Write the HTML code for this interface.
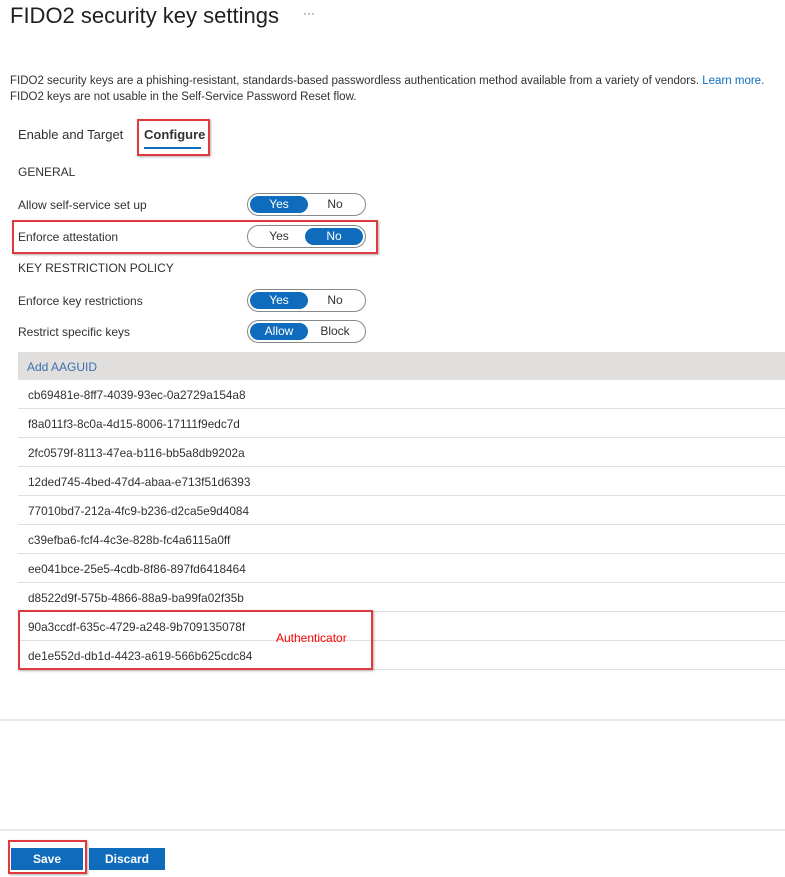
<!DOCTYPE html>
<html><head><style>
body{margin:0;width:785px;height:877px;background:#fff;font-family:"Liberation Sans",sans-serif;color:#323130;position:relative;overflow:hidden}
.a{position:absolute;white-space:nowrap}
.t{font-size:12px}
.tog{position:absolute;left:247px;width:117px;height:21px;border:1px solid #8a8886;border-radius:12px;font-size:12px}
.tog span{position:absolute;top:2px;height:17px;line-height:17px;width:58px;text-align:center;border-radius:9px}
.on{background:#0f6cbd;color:#fff}
.red{position:absolute;border:2px solid #e0393e;box-shadow:1px 1px 2px rgba(0,0,0,.3)}
.row{position:absolute;left:18px;width:767px;height:28px;border-bottom:1px solid #e1dfdd;font-size:11.8px;line-height:31px;text-indent:10px;color:#323130}
.btn{position:absolute;top:848px;height:22px;background:#0f6cbd;color:#fff;font-weight:bold;font-size:12px;text-align:center;line-height:22px}
</style></head><body>
<div class="a" style="left:10px;top:3px;font-size:22px;color:#201f1e">FIDO2 security key settings</div>
<div class="a" style="left:303px;top:6px;font-size:12px;color:#605e5c">···</div>
<div class="a t" style="left:10px;top:73px;line-height:16px;font-size:11.5px">FIDO2 security keys are a phishing-resistant, standards-based passwordless authentication method available from a variety of vendors. <span style="color:#0f6cbd">Learn more.</span><br>FIDO2 keys are not usable in the Self-Service Password Reset flow.</div>
<div class="a" style="left:18px;top:127px;font-size:13px">Enable and Target</div>
<div class="a" style="left:144px;top:127px;font-size:13px;font-weight:bold">Configure</div>
<div class="a" style="left:144px;top:147px;width:57px;height:2px;background:#0f6cbd"></div>
<div class="red" style="left:137px;top:119px;width:69px;height:33px"></div>
<div class="a t" style="left:18px;top:165px">GENERAL</div>
<div class="a t" style="left:18px;top:198px">Allow self-service set up</div>
<div class="tog" style="top:193px"><span class="on" style="left:2px">Yes</span><span style="left:58px">No</span></div>
<div class="a t" style="left:18px;top:230px">Enforce attestation</div>
<div class="tog" style="top:225px"><span style="left:2px">Yes</span><span class="on" style="left:57px">No</span></div>
<div class="red" style="left:12px;top:220px;width:362px;height:30px"></div>
<div class="a t" style="left:18px;top:261px">KEY RESTRICTION POLICY</div>
<div class="a t" style="left:18px;top:294px">Enforce key restrictions</div>
<div class="tog" style="top:289px"><span class="on" style="left:2px">Yes</span><span style="left:58px">No</span></div>
<div class="a t" style="left:18px;top:325px">Restrict specific keys</div>
<div class="tog" style="top:320px"><span class="on" style="left:2px">Allow</span><span style="left:58px">Block</span></div>
<div class="a" style="left:18px;top:352px;width:767px;height:28px;background:#e1dfdd;font-size:12px;line-height:30px;text-indent:9px;color:#3a6fb0">Add AAGUID</div>
<div class="row" style="top:380px">cb69481e-8ff7-4039-93ec-0a2729a154a8</div>
<div class="row" style="top:409px">f8a011f3-8c0a-4d15-8006-17111f9edc7d</div>
<div class="row" style="top:438px">2fc0579f-8113-47ea-b116-bb5a8db9202a</div>
<div class="row" style="top:467px">12ded745-4bed-47d4-abaa-e713f51d6393</div>
<div class="row" style="top:496px">77010bd7-212a-4fc9-b236-d2ca5e9d4084</div>
<div class="row" style="top:525px">c39efba6-fcf4-4c3e-828b-fc4a6115a0ff</div>
<div class="row" style="top:554px">ee041bce-25e5-4cdb-8f86-897fd6418464</div>
<div class="row" style="top:583px">d8522d9f-575b-4866-88a9-ba99fa02f35b</div>
<div class="row" style="top:612px">90a3ccdf-635c-4729-a248-9b709135078f</div>
<div class="row" style="top:641px">de1e552d-db1d-4423-a619-566b625cdc84</div>
<div class="red" style="left:18px;top:610px;width:351px;height:56px"></div>
<div class="a" style="left:276px;top:631px;font-size:12px;color:#f00">Authenticator</div>
<div class="a" style="left:0;top:719px;width:785px;height:2px;background:#edebe9"></div>
<div class="a" style="left:0;top:829px;width:785px;height:2px;background:#edebe9"></div>
<div class="btn" style="left:11px;width:72px">Save</div>
<div class="btn" style="left:89px;width:76px">Discard</div>
<div class="red" style="left:8px;top:840px;width:75px;height:30px"></div>
</body></html>
